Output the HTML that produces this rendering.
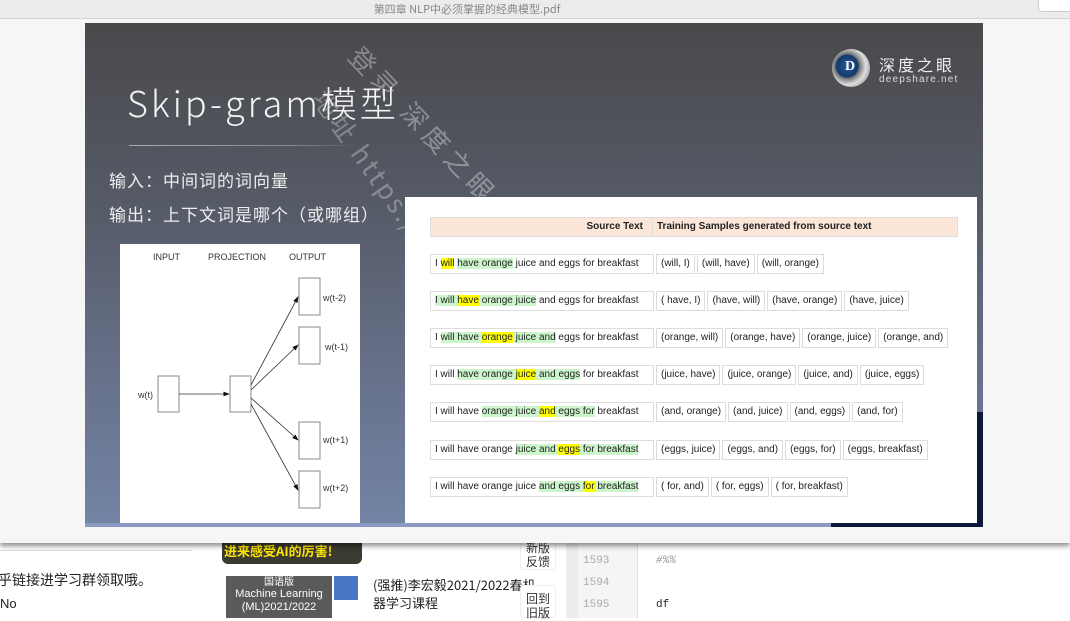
<!DOCTYPE html>
<html><head><meta charset="utf-8"><style>
*{margin:0;padding:0;box-sizing:border-box}
body{width:1070px;height:618px;overflow:hidden;position:relative;background:#fff;font-family:"Liberation Sans","Noto Sans CJK SC",sans-serif}
.abs{position:absolute}
.cjk{font-family:"Noto Sans CJK SC","WenQuanYi Zen Hei",sans-serif}
.row{position:absolute;left:430px;height:20px;display:flex;font-size:10px;color:#222;font-family:"Liberation Sans",sans-serif}
.row span.c{border:1px solid #dcdcdc;padding:0 4px;line-height:18px;white-space:nowrap;margin-right:2px}
.row span.c:first-child{width:224px;padding:0 4px}
.y{background:#ffff00}.g{background:#ccf5cc}
</style></head><body>
<!-- bottom webpage -->
<div class="abs" style="left:0;top:543px;width:1070px;height:75px;background:#fff"></div>
<div class="abs" style="left:0;top:550px;width:192px;height:1px;background:#ddd"></div>
<div class="abs cjk" style="left:-2px;top:570px;font-size:14px;color:#222">乎链接进学习群领取哦。</div>
<div class="abs" style="left:0;top:596px;font-size:13px;color:#222">No</div>
<div class="abs" style="left:222px;top:540px;width:140px;height:24px;background:#3a3a30;border-radius:0 0 6px 6px"></div>
<div class="abs cjk" style="left:224px;top:541px;font-size:13px;font-weight:bold;color:#ffe600">进来感受AI的厉害!</div>
<div class="abs" style="left:226px;top:576px;width:106px;height:42px;background:#5a5a5a"></div>
<div class="abs cjk" style="left:226px;top:575px;width:106px;text-align:center;font-size:10px;color:#fff;line-height:12px">国语版<br><span style="font-family:'Liberation Sans';font-size:11px">Machine Learning<br>(ML)2021/2022</span></div>
<div class="abs" style="left:334px;top:576px;width:24px;height:24px;background:#4a76c8"></div>
<div class="abs cjk" style="left:373px;top:576px;font-size:13px;color:#222;line-height:18px">(强推)李宏毅2021/2022春机<br>器学习课程</div>
<div class="abs cjk" style="left:520px;top:540px;width:36px;height:30px;background:#fff;border:1px solid #eee;border-radius:4px;font-size:12px;line-height:14px;text-align:center;color:#333">新版<br>反馈</div>
<div class="abs cjk" style="left:520px;top:585px;width:36px;height:33px;background:#fff;border:1px solid #eee;border-radius:4px;font-size:12px;line-height:14px;text-align:center;color:#333;padding-top:6px">回到<br>旧版</div>
<div class="abs" style="left:566px;top:543px;width:12px;height:75px;background:#ececec"></div>
<div class="abs" style="left:578px;top:543px;width:60px;height:75px;background:#f5f5f5;border-right:1px solid #e0e0e0"></div>
<div class="abs" style="left:583px;top:550px;font-size:11px;color:#aaa;line-height:22px;font-family:'Liberation Mono'">1593<br>1594<br>1595</div>
<div class="abs" style="left:656px;top:550px;font-size:11px;line-height:22px;font-family:'Liberation Mono'"><span style="color:#999;font-style:italic">#%%</span><br>&nbsp;<br><span style="color:#222">df</span></div>
<!-- pdf window -->
<div class="abs" style="left:0;top:0;width:1070px;height:543px;background:#f6f6f6;box-shadow:0 3px 5px rgba(0,0,0,.45)"></div>
<div class="abs" style="left:0;top:0;width:1070px;height:19px;background:#ececec;border-bottom:1px solid #d4d4d4"></div>
<div class="abs cjk" style="left:0;top:1px;width:934px;text-align:center;font-size:11px;color:#888">第四章 NLP中必须掌握的经典模型.pdf</div>
<div class="abs" style="left:1038px;top:-4px;width:40px;height:16px;background:#fff;border:1px solid #ccc;border-radius:4px"></div>
<!-- slide -->
<div class="abs" style="left:85px;top:23px;width:898px;height:504px;background:linear-gradient(#49494b 0%,#555a66 35%,#67718a 70%,#7384a6 100%)"></div>
<div class="abs" style="left:831px;top:412px;width:152px;height:115px;background:#0b1838"></div>
<div class="abs" style="left:85px;top:523px;width:746px;height:4px;background:#8a9ac0"></div>
<div class="abs" style="left:127px;top:76px;font-size:36px;color:#f2f2f2;letter-spacing:3px;font-family:'Noto Sans CJK SC',sans-serif;font-weight:300">Skip-gram模型</div>
<div class="abs" style="left:129px;top:145px;width:230px;height:1px;background:linear-gradient(90deg,#aaa,#888 70%,rgba(136,136,136,0))"></div>
<div class="abs cjk" style="left:109px;top:167px;font-size:17px;color:#eee;letter-spacing:1px">输入：中间词的词向量</div>
<div class="abs cjk" style="left:109px;top:201px;font-size:17px;color:#eee;letter-spacing:1px">输出：上下文词是哪个（或哪组）</div>
<!-- watermark -->
<div class="abs cjk" style="left:368px;top:38px;font-size:26px;letter-spacing:6px;color:rgba(255,255,255,.35);transform:rotate(47deg);transform-origin:0 0;white-space:nowrap">登录 深度之眼</div>
<div class="abs cjk" style="left:335px;top:82px;font-size:26px;letter-spacing:3px;color:rgba(255,255,255,.3);transform:rotate(55deg);transform-origin:0 0;white-space:nowrap">地址 https://a</div>
<!-- logo -->
<div class="abs" style="left:832px;top:49px;width:38px;height:38px;border-radius:50%;background:radial-gradient(circle at 40% 45%,#2a5c9a 0,#123a6a 35%,#777 40%,#ddd 60%,#666 100%)"></div>
<div class="abs" style="left:845px;top:59px;font-size:14px;font-weight:bold;color:#fff;font-family:'Liberation Serif'">D</div>
<div class="abs cjk" style="left:879px;top:52px;font-size:16px;color:#eee;letter-spacing:3px">深度之眼</div>
<div class="abs" style="left:879px;top:74px;font-size:10px;color:#ddd;letter-spacing:1.2px">deepshare.net</div>
<!-- diagram -->
<div class="abs" style="left:120px;top:244px;width:240px;height:279px;background:#fff"></div>
<svg class="abs" style="left:120px;top:244px" width="240" height="279" font-family="Liberation Sans" font-size="9" fill="#333">
<defs><marker id="a" markerWidth="8" markerHeight="8" refX="7" refY="3" orient="auto"><path d="M0,0L8,3L0,6z" fill="#111"/></marker></defs>
<text x="33" y="16">INPUT</text><text x="88" y="16">PROJECTION</text><text x="169" y="16">OUTPUT</text>
<g fill="#fff" stroke="#888"><rect x="38" y="132" width="21" height="36"/><rect x="110" y="132" width="21" height="36"/><rect x="179" y="34" width="21" height="37"/><rect x="179" y="83" width="21" height="37"/><rect x="179" y="178" width="21" height="37"/><rect x="179" y="227" width="21" height="37"/></g>
<text x="18" y="154">w(t)</text><text x="203" y="57">w(t-2)</text><text x="205" y="106">w(t-1)</text><text x="203" y="199">w(t+1)</text><text x="203" y="247">w(t+2)</text>
<g stroke="#333" stroke-width=".8" marker-end="url(#a)"><line x1="59" y1="150" x2="109" y2="150"/><line x1="131" y1="141" x2="178" y2="53"/><line x1="131" y1="146" x2="178" y2="101"/><line x1="131" y1="154" x2="178" y2="196"/><line x1="131" y1="160" x2="178" y2="246"/></g>
</svg>
<!-- table -->
<div class="abs" style="left:405px;top:197px;width:572px;height:326px;background:#fff"></div>
<div class="abs" style="left:430px;top:217px;width:528px;height:20px;border:1px solid #ddd;background:#fce6d8;font-size:10px;font-weight:bold;color:#222;line-height:18px">
<span style="position:absolute;left:0;width:212px;text-align:right">Source Text</span><span style="position:absolute;left:221px;top:-1px;height:20px;border-left:1px solid #ddd"></span><span style="position:absolute;left:226px">Training Samples generated from source text</span></div>
<div class="row" style="top:254px"><span class="c">I <span class="y">will</span> <span class="g">have orange</span> juice and eggs for breakfast</span><span class="c">(will, I)</span><span class="c">(will, have)</span><span class="c">(will, orange)</span></div>
<div class="row" style="top:291px"><span class="c"><span class="g">I will </span><span class="y">have</span><span class="g"> orange juice</span> and eggs for breakfast</span><span class="c">( have, I)</span><span class="c">(have, will)</span><span class="c">(have, orange)</span><span class="c">(have, juice)</span></div>
<div class="row" style="top:328px"><span class="c">I <span class="g">will have </span><span class="y">orange</span><span class="g"> juice and</span> eggs for breakfast</span><span class="c">(orange, will)</span><span class="c">(orange, have)</span><span class="c">(orange, juice)</span><span class="c">(orange, and)</span></div>
<div class="row" style="top:365px"><span class="c">I will <span class="g">have orange </span><span class="y">juice</span><span class="g"> and eggs</span> for breakfast</span><span class="c">(juice, have)</span><span class="c">(juice, orange)</span><span class="c">(juice, and)</span><span class="c">(juice, eggs)</span></div>
<div class="row" style="top:402px"><span class="c">I will have <span class="g">orange juice </span><span class="y">and</span><span class="g"> eggs for</span> breakfast</span><span class="c">(and, orange)</span><span class="c">(and, juice)</span><span class="c">(and, eggs)</span><span class="c">(and, for)</span></div>
<div class="row" style="top:440px"><span class="c">I will have orange <span class="g">juice and </span><span class="y">eggs</span><span class="g"> for breakfast</span></span><span class="c">(eggs, juice)</span><span class="c">(eggs, and)</span><span class="c">(eggs, for)</span><span class="c">(eggs, breakfast)</span></div>
<div class="row" style="top:477px"><span class="c">I will have orange juice <span class="g">and eggs </span><span class="y">for</span><span class="g"> breakfast</span></span><span class="c">( for, and)</span><span class="c">( for, eggs)</span><span class="c">( for, breakfast)</span></div>
</body></html>
